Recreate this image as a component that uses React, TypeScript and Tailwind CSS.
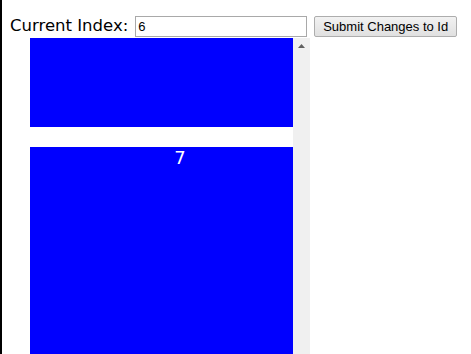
import React from "react";

const items = [6, 7, 8];

export default function App() {
  return (
    <div className="h-[354px] overflow-hidden border-l-2 border-black bg-white font-['DejaVu_Sans',sans-serif]">
      {/* top row */}
      <div className="flex h-[38px] items-end pl-[8px] pb-[1px]">
        <span className="mb-[2px] text-[16.5px] leading-[19px] text-black">Current Index:</span>
        <input
          defaultValue="6"
          className="ml-[7px] h-[21px] w-[172px] border border-[#a9a9a9] bg-white px-[2px] font-['Liberation_Sans',Arial,sans-serif] text-[13px] text-black outline-none"
        />
        <button className="ml-[7px] h-[21px] w-[143px] rounded-[2px] border border-[#adadad] bg-gradient-to-b from-[#f2f2f2] to-[#e0e0e0] font-['Liberation_Sans',Arial,sans-serif] text-[13px] leading-none text-black">
          Submit Changes to Id
        </button>
      </div>

      {/* list with scrollbar */}
      <div className="ml-[28px] flex h-[316px] w-[280px]">
        <div className="w-[263px] overflow-hidden">
          <div className="-mt-[161px] flex flex-col gap-[20px]">
            {items.map((n) => (
              <div
                key={n}
                className="h-[250px] w-[300px] bg-[#0000ff] text-center text-[18px] leading-[21px] text-white"
              >
                {n}
              </div>
            ))}
          </div>
        </div>
        <div className="flex w-[17px] justify-center bg-[#f0f0f0] pt-[6px]">
          <svg width="7" height="4" viewBox="0 0 7 4">
            <path d="M3.5 0 L7 4 L0 4 Z" fill="#606060" />
          </svg>
        </div>
      </div>
    </div>
  );
}
